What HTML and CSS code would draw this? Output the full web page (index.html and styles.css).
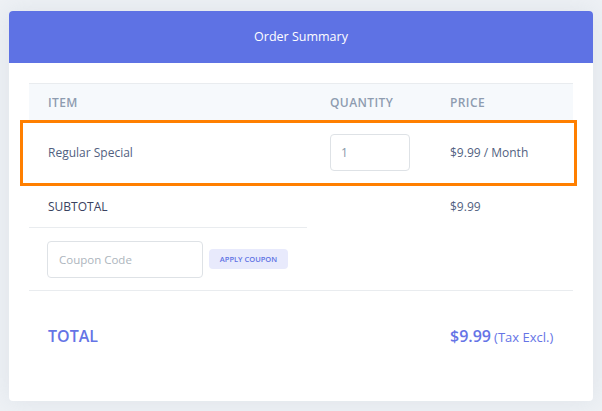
FILE: index.html
```html
<!DOCTYPE html>
<html lang="en">
<head>
    <meta charset="UTF-8">
    <meta name="viewport" content="width=device-width, initial-scale=1.0">
    <title>Order Summary</title>
    <link rel="stylesheet" href="styles.css">
</head>
<body>
    <div class="card">
        <div class="card-header">Order Summary</div>
        <div class="card-body">
            <table class="summary">
                <colgroup>
                    <col class="col-item">
                    <col class="col-qty">
                    <col class="col-price">
                </colgroup>
                <thead>
                    <tr>
                        <th>Item</th>
                        <th>Quantity</th>
                        <th>Price</th>
                    </tr>
                </thead>
                <tbody>
                    <tr class="row-item">
                        <td>Regular Special</td>
                        <td><input type="text" class="qty" value="1"></td>
                        <td>$9.99 / Month</td>
                    </tr>
                    <tr class="row-subtotal">
                        <td class="label">SUBTOTAL</td>
                        <td></td>
                        <td>$9.99</td>
                    </tr>
                    <tr class="row-coupon">
                        <td>
                            <div class="coupon">
                                <input type="text" class="coupon-input" placeholder="Coupon Code">
                                <button type="button" class="coupon-btn">Apply Coupon</button>
                            </div>
                        </td>
                        <td></td>
                        <td></td>
                    </tr>
                    <tr class="row-total">
                        <td class="total-label">TOTAL</td>
                        <td></td>
                        <td><span class="total-price">$9.99</span> <span class="tax">(Tax Excl.)</span></td>
                    </tr>
                </tbody>
            </table>
        </div>
        <div class="highlight"></div>
    </div>
</body>
</html>
```

FILE: styles.css
```css
body {
    font-family: 'Open Sans', 'Liberation Sans', sans-serif;
    background-color: #eef1f5;
    margin: 0;
    padding: 11px 9px;
    color: #525f7f;
}
.card {
    position: relative;
    background: #fff;
    border-radius: 4px;
    height: 390px;
    box-shadow: 0 0 24px rgba(136, 152, 170, 0.15);
}
.card-header {
    height: 52px;
    line-height: 52px;
    background-color: #5e72e4;
    color: #fff;
    text-align: center;
    font-size: 12.5px;
    border-radius: 4px 4px 0 0;
}
.card-body {
    padding: 20px;
}
.summary {
    width: 100%;
    border-collapse: collapse;
    table-layout: fixed;
    font-size: 12px;
}
.col-item {
    width: 278px;
}
.col-qty {
    width: 120px;
}
.summary th,
.summary td {
    padding: 0 0 0 23px;
    text-align: left;
    vertical-align: middle;
}
.summary th:first-child,
.summary td:first-child {
    padding-left: 19px;
}
.summary th {
    height: 36px;
    background-color: #f6f9fc;
    border-top: 1px solid #e9ecef;
    color: #8e9cb0;
    font-weight: 600;
    font-size: 12px;
    letter-spacing: 0.4px;
    text-transform: uppercase;
}
.row-item td {
    height: 65px;
}
.qty {
    box-sizing: border-box;
    width: 80px;
    height: 37px;
    padding: 0 10px;
    border: 1px solid #dee2e6;
    border-radius: 4px;
    font-family: inherit;
    font-size: 12px;
    color: #8898aa;
    display: block;
}
.row-subtotal td {
    height: 42px;
}
.row-subtotal .label {
    color: #3a4260;
    border-bottom: 1px solid #e9ecef;
}
.row-coupon td {
    height: 62px;
    border-bottom: 1px solid #e9ecef;
}
.row-coupon td:first-child {
    padding-left: 18px;
}
.coupon {
    display: flex;
    align-items: center;
    gap: 6px;
}
.coupon-input {
    box-sizing: border-box;
    width: 156px;
    height: 37px;
    padding: 0 11px;
    border: 1px solid #dee2e6;
    border-radius: 4px;
    font-family: inherit;
    font-size: 11.5px;
    color: #525f7f;
}
.coupon-input::placeholder {
    color: #adb5bd;
}
.coupon-btn {
    width: 79px;
    height: 20px;
    padding: 0;
    border: none;
    border-radius: 4px;
    background-color: #e8eafc;
    color: #5e72e4;
    font-family: inherit;
    font-size: 7.5px;
    font-weight: 600;
    text-transform: uppercase;
}
.row-total td {
    height: 90px;
}
.total-label {
    color: #6574e6;
    font-size: 16px;
    font-weight: 600;
}
.total-price {
    color: #6574e6;
    font-size: 16px;
    font-weight: 600;
}
.tax {
    color: #6574e6;
    font-size: 13px;
}
.highlight {
    position: absolute;
    left: 11px;
    top: 109px;
    width: 557px;
    height: 66px;
    box-sizing: border-box;
    border: 3px solid #ff7f00;
    pointer-events: none;
}
```
